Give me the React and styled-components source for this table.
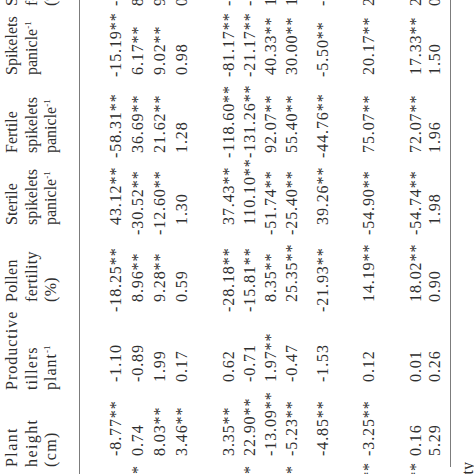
import React from "react";
import styled, { createGlobalStyle } from "styled-components";

const GlobalStyle = createGlobalStyle`
  html, body {
    margin: 0;
    padding: 0;
    background: #fff;
  }
  body {
    font-family: "Liberation Serif", "Times New Roman", serif;
  }
`;

// the scanned table is printed sideways: we lay it out upright and turn the sheet
const columns = [
  { key: "lead", width: 80 },
  { key: "ph", width: 77, pad: 11, hang: 0, track: 1.4, head: ["Plant", "height", "(cm)"] },
  { key: "pt", width: 88, pad: 8, hang: 0, track: 1, head: ["Productive", "tillers", ["plant", "-1"]] },
  { key: "pf", width: 77, pad: 0, hang: 10, track: 0.3, head: ["Pollen", "fertility", "(%)"] },
  { key: "ss", width: 72, pad: 0, hang: 10, track: 0, head: ["Sterile", "spikelets", ["panicle", "-1"]] },
  { key: "fs", width: 78, pad: 0, hang: 5, track: 0, head: ["Fertile", "spikelets", ["panicle", "-1"]] },
  { key: "sp", width: 69, pad: 0, hang: 2, track: 0, head: ["Spikelets", ["panicle", "-1"]] },
  { key: "sf", width: 90, pad: 0, hang: 0, track: 0, head: ["Spikelet", "fertility", "(%)"] },
];

const groups = [
  {
    title: "Lines",
    size: 26,
    rows: [
      { lead: "10.42", shift: 14, values: ["-8.77**", "-1.10", "-18.25**", "43.12**", "-58.31**", "-15.19**", "-12.08**"] },
      { lead: "-12.30**", shift: -2, values: ["0.74", "-0.89", "8.96**", "-30.52**", "36.69**", "6.17**", "8.14**"] },
      { lead: "4.18", shift: 14, values: ["8.03**", "1.99", "9.28**", "-12.60**", "21.62**", "9.02**", "9.55**"] },
      { lead: "0.64", shift: 14, values: ["3.46**", "0.17", "0.59", "1.30", "1.28", "0.98", "0.87"] },
    ],
  },
  {
    title: "Testers",
    size: 25,
    rows: [
      { lead: "2.11", size: 21, shift: 14, values: ["3.35**", "0.62", "-28.18**", "37.43**", "-118.60**", "-81.17**", "-14.26**"] },
      { lead: "-6.42**", size: 21, shift: -2, values: ["22.90**", "-0.71", "-15.81**", "110.10**", "-131.26**", "-21.17**", "-17.05**"] },
      { lead: "1.07", size: 21, shift: 14, values: ["-13.09**", "1.97**", "8.35**", "-51.74**", "92.07**", "40.33**", "11.29**"] },
      { lead: "3.58**", size: 21, shift: -2, values: ["-5.23**", "-0.47", "25.35**", "-25.40**", "55.40**", "30.00**", "16.02**"] },
      { lead: "0.93", size: 41, shift: 14, values: ["-4.85**", "-1.53", "-21.93**", "39.26**", "-44.76**", "-5.50**", "-6.31**"] },
    ],
  },
  {
    title: "",
    size: 15,
    rows: [
      { lead: "-4.27**", shift: -5, values: ["-3.25**", "0.12", "14.19**", "-54.90**", "75.07**", "20.17**", "21.44**"] },
    ],
  },
  {
    title: "",
    size: 25,
    rows: [
      { lead: "5.16**", size: 21, shift: -5, values: ["0.16", "0.01", "18.02**", "-54.74**", "72.07**", "17.33**", "23.10**"] },
      { lead: "1.12", size: 24, top: true, shift: 14, values: ["5.29", "0.26", "0.90", "1.98", "1.96", "1.50", "0.92"] },
    ],
  },
];

const Viewport = styled.div`
  width: 474px;
  height: 474px;
  overflow: hidden;
  background: #fff;
`;

const Sheet = styled.div`
  width: 474px;
  height: 474px;
  overflow: hidden;
  transform: rotate(-90deg);
  transform-origin: 50% 50%;
  color: #2e2e2e;
  font-size: 16px;
`;

const Table = styled.table`
  border-collapse: collapse;
  table-layout: fixed;
  width: 631px;
  margin-left: -73px;
`;

const HeadRow = styled.tr`
  height: 79px;
`;

const HeadCell = styled.th`
  text-align: left;
  vertical-align: top;
  font-weight: normal;
  padding: 2px 0 0 0;
  line-height: 19.5px;
  letter-spacing: ${(p) => p.$track || 0}px;
  white-space: nowrap;
  border-bottom: 1.5px solid #7c7c7c;
`;

const HeadLine = styled.div``;

const Sup = styled.sup`
  font-size: 9px;
  letter-spacing: 0;
  vertical-align: 6px;
  line-height: 0;
`;

const Row = styled.tr`
  height: ${(p) => p.$size}px;
`;

const LastRow = styled(Row)`
  & > td {
    border-bottom: 1.5px solid #7c7c7c;
  }
  & > td:first-child {
    border-bottom: none;
  }
`;

const Cell = styled.td`
  padding: 0 0 0 ${(p) => p.$pad || 0}px;
  vertical-align: ${(p) => (p.$top ? "top" : "middle")};
  line-height: 18px;
  white-space: nowrap;
  letter-spacing: 0.9px;
`;

const LeadCell = styled(Cell)`
  text-align: right;
  padding: 0;
`;

const LeadValue = styled.span`
  display: inline-block;
  margin-right: ${(p) => p.$shift}px;
`;

const Minus = styled.span`
  margin-left: -${(p) => p.$hang}px;
`;

const Footnote = styled.div`
  width: 85px;
  margin-left: -73px;
  margin-top: 8px;
  display: flex;
  justify-content: flex-end;
  line-height: 18px;
  white-space: nowrap;
`;

const FootText = styled.span`
  flex-shrink: 0;
`;

const Number = ({ value, hang }) =>
  value.startsWith("-") ? (
    <>
      <Minus $hang={hang}>-</Minus>
      {value.slice(1)}
    </>
  ) : (
    value
  );

const HeadText = ({ line }) =>
  Array.isArray(line) ? (
    <HeadLine>
      {line[0]}
      <Sup>{line[1]}</Sup>
    </HeadLine>
  ) : (
    <HeadLine>{line}</HeadLine>
  );

const DataRow = ({ row, last }) => {
  const RowTag = last ? LastRow : Row;
  return (
    <RowTag $size={row.size || 22}>
      <LeadCell $top={row.top}>
        <LeadValue $shift={row.shift}>{row.lead}</LeadValue>
      </LeadCell>
      {columns.slice(1).map((col, i) => (
        <Cell key={col.key} $pad={col.pad} $top={row.top}>
          <Number value={row.values[i]} hang={col.hang} />
        </Cell>
      ))}
    </RowTag>
  );
};

const App = () => {
  return (
    <Viewport>
      <GlobalStyle />
      <Sheet>
        <Table>
          <colgroup>
            {columns.map((col) => (
              <col key={col.key} style={{ width: col.width }} />
            ))}
          </colgroup>
          <thead>
            <HeadRow>
              <HeadCell>Source</HeadCell>
              {columns.slice(1).map((col) => (
                <HeadCell key={col.key} $track={col.track}>
                  {col.head.map((line, i) => (
                    <HeadText key={i} line={line} />
                  ))}
                </HeadCell>
              ))}
            </HeadRow>
          </thead>
          <tbody>
            {groups.map((group, g) => (
              <React.Fragment key={g}>
                <Row $size={group.size}>
                  <Cell colSpan={columns.length}>{group.title}</Cell>
                </Row>
                {group.rows.map((row, r) => (
                  <DataRow
                    key={r}
                    row={row}
                    last={g === groups.length - 1 && r === group.rows.length - 1}
                  />
                ))}
              </React.Fragment>
            ))}
          </tbody>
        </Table>
        <Footnote>
          <FootText>** Significant at 1% level of probability</FootText>
        </Footnote>
      </Sheet>
    </Viewport>
  );
};

export default App;
